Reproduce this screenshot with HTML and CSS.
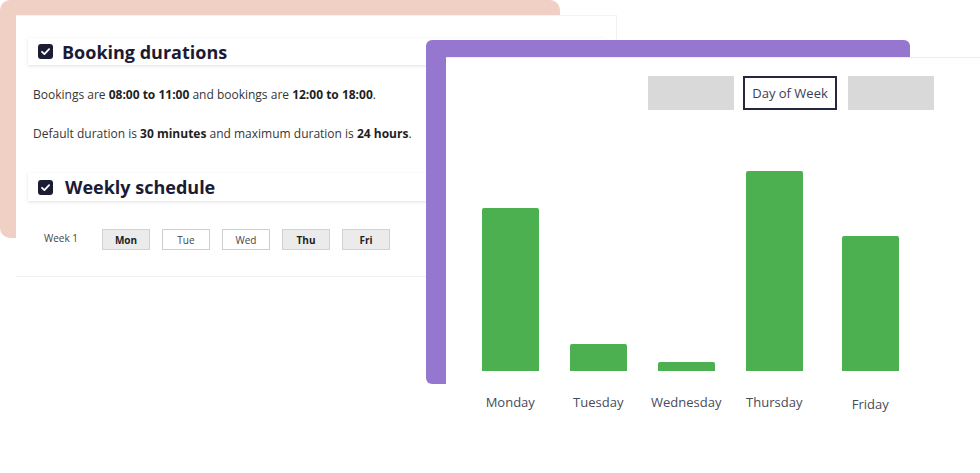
FILE: index.html
```html
<!DOCTYPE html>
<html lang="en">
<head>
<meta charset="utf-8">
<title>Booking settings and chart</title>
<link rel="stylesheet" href="styles.css">
</head>
<body>
<div class="canvas">
  <div class="backdrop backdrop-pink"></div>

  <section class="card">
    <header class="section-head">
      <svg class="check" viewBox="0 0 15 15" width="15" height="15" aria-hidden="true">
        <rect x="0" y="0" width="15" height="15" rx="3" fill="#1c1c35"/>
        <path d="M4 7.8 L6.4 10.1 L11.1 5.2" fill="none" stroke="#fff" stroke-width="1.8" stroke-linecap="round" stroke-linejoin="round"/>
      </svg>
      <h2>Booking durations</h2>
    </header>
    <p class="line first">Bookings are <b>08:00 to 11:00</b> and bookings are <b>12:00 to 18:00</b>.</p>
    <p class="line">Default duration is <b>30 minutes</b> and maximum duration is <b>24 hours</b>.</p>

    <header class="section-head second">
      <svg class="check" viewBox="0 0 15 15" width="15" height="15" aria-hidden="true">
        <rect x="0" y="0" width="15" height="15" rx="3" fill="#1c1c35"/>
        <path d="M4 7.8 L6.4 10.1 L11.1 5.2" fill="none" stroke="#fff" stroke-width="1.8" stroke-linecap="round" stroke-linejoin="round"/>
      </svg>
      <h2>Weekly schedule</h2>
    </header>
    <div class="week-row">
      <span class="week-label">Week 1</span>
      <div class="days">
        <span class="day on">Mon</span>
        <span class="day">Tue</span>
        <span class="day">Wed</span>
        <span class="day on">Thu</span>
        <span class="day on">Fri</span>
      </div>
    </div>
  </section>

  <div class="backdrop backdrop-purple"></div>

  <section class="panel">
    <div class="toolbar">
      <span class="tab blank"></span>
      <span class="tab active">Day of Week</span>
      <span class="tab blank"></span>
    </div>
    <div class="chart">
      <div class="col"><div class="bar-area"><div class="bar" style="height:163px"></div></div><span class="label">Monday</span></div>
      <div class="col"><div class="bar-area"><div class="bar" style="height:27px"></div></div><span class="label">Tuesday</span></div>
      <div class="col"><div class="bar-area"><div class="bar" style="height:9px"></div></div><span class="label">Wednesday</span></div>
      <div class="col"><div class="bar-area"><div class="bar" style="height:200px"></div></div><span class="label">Thursday</span></div>
      <div class="col last"><div class="bar-area"><div class="bar" style="height:135px"></div></div><span class="label">Friday</span></div>
    </div>
  </section>
</div>
</body>
</html>
```
FILE: styles.css
```css
* { box-sizing: border-box; }

html, body {
  margin: 0;
  padding: 0;
  background: #ffffff;
}

body {
  font-family: "Open Sans", "Noto Sans", "DejaVu Sans", sans-serif;
  color: #333333;
}

.canvas {
  position: relative;
  width: 980px;
  height: 473px;
  overflow: hidden;
  background: #ffffff;
}

.backdrop {
  position: absolute;
}

.backdrop-pink {
  left: 0;
  top: 0;
  width: 560px;
  height: 238px;
  background: #f0cfc4;
  border-radius: 10px;
}

.backdrop-purple {
  left: 426px;
  top: 40px;
  width: 484px;
  height: 344px;
  background: #9677cf;
  border-radius: 6px;
}

/* Settings card */
.card {
  position: absolute;
  left: 16px;
  top: 15px;
  width: 601px;
  height: 262px;
  background: #ffffff;
  border-top: 1px solid #f3f3f3;
  border-right: 1px solid #f1f1f1;
  border-bottom: 1px solid #f0f0f0;
  padding: 22px 0 0 12px;
}

.section-head {
  display: flex;
  align-items: center;
  gap: 9px;
  width: 577px;
  height: 27px;
  padding-left: 10px;
  background: #ffffff;
  box-shadow: 0 1px 3px rgba(0, 0, 0, 0.13);
}

.section-head.second {
  margin-top: 30px;
  height: 28px;
  gap: 12px;
}

.check {
  flex: none;
  display: block;
}

.section-head h2 {
  margin: 0;
  font-size: 18px;
  line-height: 24px;
  font-weight: 700;
  color: #1b1b33;
}

.line {
  margin: 21px 0 0 5px;
  font-size: 12px;
  line-height: 18px;
  color: #363636;
}

.line b {
  font-weight: 700;
  color: #1f1f1f;
}

.week-row {
  display: flex;
  align-items: center;
  margin-top: 28px;
  padding-left: 16px;
}

.week-label {
  width: 58px;
  font-size: 10px;
  line-height: 14px;
  color: #444444;
  margin-top: -3px;
}

.days {
  display: flex;
  gap: 12px;
}

.day {
  display: flex;
  align-items: center;
  justify-content: center;
  width: 48px;
  height: 21px;
  font-size: 10px;
  color: #444444;
  background: #ffffff;
  border: 1px solid #cfcfcf;
}

.day.on {
  background: #ebebeb;
  border-color: #d2d2d2;
  font-weight: 700;
  color: #222222;
}

/* Chart panel */
.panel {
  position: absolute;
  left: 446px;
  top: 57px;
  right: 0;
  bottom: 0;
  background: #ffffff;
  border-top: 1px solid #ececec;
  padding-top: 18px;
}

.toolbar {
  display: flex;
  align-items: stretch;
  padding-left: 202px;
  height: 34px;
}

.tab {
  display: flex;
  align-items: center;
  justify-content: center;
  font-size: 13px;
  color: #3d3d55;
}

.tab.blank {
  width: 86px;
  background: #d9d9d9;
}

.tab.active {
  width: 94px;
  margin: 0 11px 0 9px;
  border: 2px solid #262640;
  background: #ffffff;
}

.chart {
  display: flex;
  gap: 31.5px;
  padding-left: 36px;
}

.col {
  display: flex;
  flex-direction: column;
  align-items: center;
  width: 56.5px;
}

.col.last {
  margin-left: 8px;
}

.bar-area {
  display: flex;
  align-items: flex-end;
  width: 100%;
  height: 261px;
}

.bar {
  width: 100%;
  background: #4caf50;
  border-radius: 2px 2px 0 0;
}

.label {
  margin-top: 22px;
  font-size: 13px;
  line-height: 18px;
  white-space: nowrap;
  color: #474a5c;
}

.col.last .label {
  margin-top: 24px;
}
```
